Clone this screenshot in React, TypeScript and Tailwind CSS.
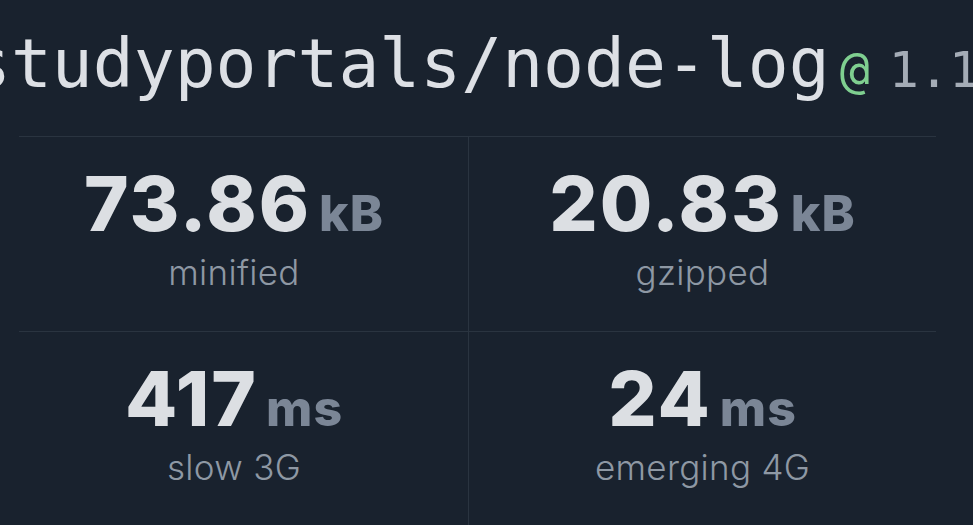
import React from "react";

type Stat = { value: string; unit: string; label: string };

const stats: Stat[][] = [
  [
    { value: "73.86", unit: "kB", label: "minified" },
    { value: "20.83", unit: "kB", label: "gzipped" },
  ],
  [
    { value: "417", unit: "ms", label: "slow 3G" },
    { value: "24", unit: "ms", label: "emerging 4G" },
  ],
];

function Cell({ s, right }: { s: Stat; right?: boolean }) {
  return (
    <div
      className={
        right
          ? "flex h-[194px] flex-col items-center pt-[28px] border-l border-[#2a3440]"
          : "flex h-[194px] flex-col items-center pt-[28px]"
      }
    >
      <div className="flex items-baseline">
        <span className="text-[76px] leading-none font-extrabold text-[#dcdfe3] tracking-[2px]">
          {s.value}
        </span>
        <span className="ml-[8px] text-[50px] leading-none font-extrabold text-[#7b8696] tracking-[1px]">
          {s.unit}
        </span>
      </div>
      <div className="mt-[14px] text-[35px] leading-none font-light text-[#8e98a4] tracking-[0.3px]">
        {s.label}
      </div>
    </div>
  );
}

export default function App() {
  return (
    <div
      className="h-[525px] w-[973px] overflow-hidden bg-[#19222e]"
      style={{ fontFamily: "Inter, 'Noto Sans', sans-serif" }}
    >
      <div className="flex items-baseline whitespace-nowrap pt-[30px] ml-[-71px] font-['DejaVu_Sans_Mono',monospace]">
        <span className="text-[68px] leading-none text-[#dde0e5]">
          @studyportals/node-log
        </span>
        <span className="ml-[10px] text-[50px] leading-none text-[#7fcf90]">@</span>
        <span className="ml-[19px] text-[50px] leading-none text-[#a4acb6]">1.1.0</span>
      </div>
      <div className="mt-[38px] w-[936px]">
        <div className="ml-[19px] h-px w-[917px] bg-[#2a3440]" />
        <div className="grid grid-cols-2">
          <Cell s={stats[0][0]} />
          <Cell s={stats[0][1]} right />
        </div>
        <div className="ml-[19px] h-px w-[917px] bg-[#2a3440]" />
        <div className="grid grid-cols-2">
          <Cell s={stats[1][0]} />
          <Cell s={stats[1][1]} right />
        </div>
      </div>
    </div>
  );
}
